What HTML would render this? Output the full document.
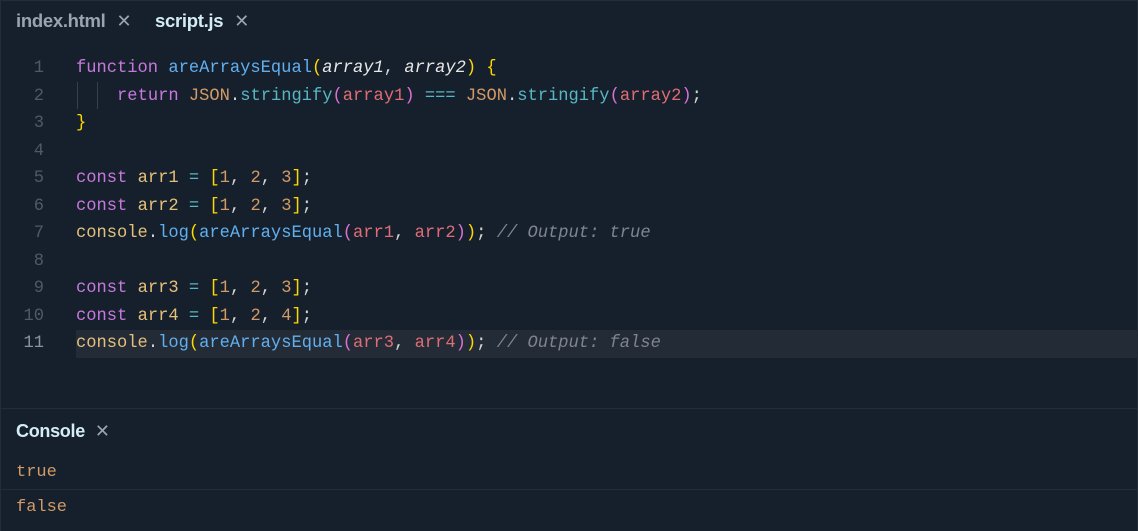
<!DOCTYPE html>
<html><head><meta charset="utf-8"><style>
*{margin:0;padding:0;box-sizing:border-box}
body{width:1138px;height:531px;background:#16202c;overflow:hidden;font-family:"Liberation Sans",sans-serif;position:relative}
.frame{position:absolute;left:0;top:0;width:1138px;height:531px;border:1px solid #222d39;border-bottom:none}
.tab{position:absolute;top:10px;font-size:18.5px;font-weight:bold;letter-spacing:-0.3px}
.x{font-weight:normal;font-size:18px;margin-left:11px}
.code{position:absolute;left:0;top:55px;width:1138px;font-family:"Liberation Mono",monospace;font-size:17.1px}
.ln{height:27.5px;line-height:27.5px;position:relative;white-space:pre;color:#d4d4d4}
.num{position:absolute;left:0;width:44px;text-align:right;color:#4f5a66}
.t{position:absolute;left:76px}
.hl{background:#232b36;left:76px;right:0;position:absolute;top:0;bottom:0}
.k{color:#c678dd}.f{color:#61afef}.p{color:#e8e8e8;font-style:italic}.y{color:#ffd700}.m{color:#da70d6}
.v{color:#e5c07b}.n{color:#d19a66}.o{color:#56b6c2}.r{color:#e06c75}.c{color:#7f848e;font-style:italic}.w{color:#d4d4d4}
.guide{position:absolute;top:82px;height:27px;width:1px;background:#36404c}
.sep{position:absolute;left:0;right:0;height:1px;background:#222d39}
.out{position:absolute;left:16px;font-family:"Liberation Mono",monospace;font-size:17px;color:#d19a66}
</style></head><body>
<div class="frame"></div>
<div class="tab" style="left:16px;color:#9aa4b0">index.html<span class="x">✕</span></div>
<div class="tab" style="left:155px;color:#d4ecf6">script.js<span class="x" style="color:#9aa4b0">✕</span></div>
<div class="guide" style="left:77px"></div><div class="guide" style="left:97px"></div>
<div class="code">
<div class="ln"><span class="num">1</span><span class="t"><span class="k">function</span> <span class="f">areArraysEqual</span><span class="y">(</span><span class="p">array1</span><span class="w">, </span><span class="p">array2</span><span class="y">)</span> <span class="y">{</span></span></div>
<div class="ln"><span class="num">2</span><span class="t">    <span class="k">return</span> <span class="n">JSON</span><span class="w">.</span><span class="o">stringify</span><span class="m">(</span><span class="r">array1</span><span class="m">)</span> <span class="o">===</span> <span class="n">JSON</span><span class="w">.</span><span class="o">stringify</span><span class="m">(</span><span class="r">array2</span><span class="m">)</span><span class="w">;</span></span></div>
<div class="ln"><span class="num">3</span><span class="t"><span class="y">}</span></span></div>
<div class="ln"><span class="num">4</span></div>
<div class="ln"><span class="num">5</span><span class="t"><span class="k">const</span> <span class="v">arr1</span> <span class="o">=</span> <span class="y">[</span><span class="n">1</span>, <span class="n">2</span>, <span class="n">3</span><span class="y">]</span>;</span></div>
<div class="ln"><span class="num">6</span><span class="t"><span class="k">const</span> <span class="v">arr2</span> <span class="o">=</span> <span class="y">[</span><span class="n">1</span>, <span class="n">2</span>, <span class="n">3</span><span class="y">]</span>;</span></div>
<div class="ln"><span class="num">7</span><span class="t"><span class="v">console</span>.<span class="f">log</span><span class="y">(</span><span class="f">areArraysEqual</span><span class="m">(</span><span class="r">arr1</span>, <span class="r">arr2</span><span class="m">)</span><span class="y">)</span>; <span class="c">// Output: true</span></span></div>
<div class="ln"><span class="num">8</span></div>
<div class="ln"><span class="num">9</span><span class="t"><span class="k">const</span> <span class="v">arr3</span> <span class="o">=</span> <span class="y">[</span><span class="n">1</span>, <span class="n">2</span>, <span class="n">3</span><span class="y">]</span>;</span></div>
<div class="ln"><span class="num">10</span><span class="t"><span class="k">const</span> <span class="v">arr4</span> <span class="o">=</span> <span class="y">[</span><span class="n">1</span>, <span class="n">2</span>, <span class="n">4</span><span class="y">]</span>;</span></div>
<div class="ln"><span class="hl"></span><span class="num" style="color:#8a949f">11</span><span class="t"><span class="v">console</span>.<span class="f">log</span><span class="y">(</span><span class="f">areArraysEqual</span><span class="m">(</span><span class="r">arr3</span>, <span class="r">arr4</span><span class="m">)</span><span class="y">)</span>; <span class="c">// Output: false</span></span></div>
</div>
<div class="sep" style="top:408px"></div>
<div class="tab" style="left:16px;top:421px;color:#d4ecf6;font-size:18px">Console<span class="x" style="color:#9aa4b0;margin-left:10px">✕</span></div>
<div class="out" style="top:463px">true</div>
<div class="sep" style="top:489px"></div>
<div class="out" style="top:498px">false</div>
</body></html>
